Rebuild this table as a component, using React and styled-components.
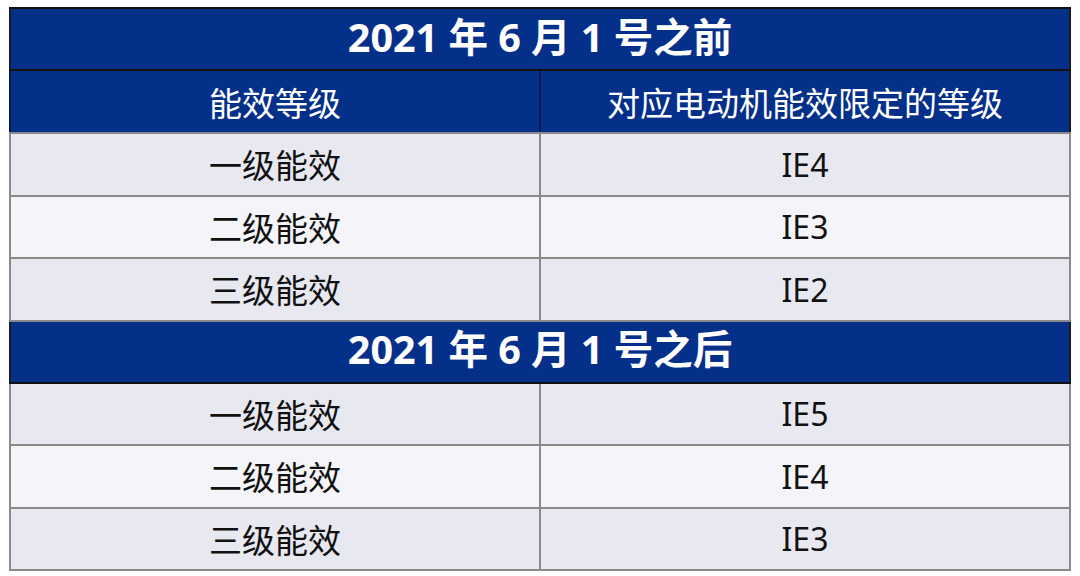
import React from "react";
import styled, { createGlobalStyle } from "styled-components";

const sections = [
  {
    title: "2021 年 6 月 1 号之前",
    head: ["能效等级", "对应电动机能效限定的等级"],
    rows: [
      ["一级能效", "IE4"],
      ["二级能效", "IE3"],
      ["三级能效", "IE2"],
    ],
  },
  {
    title: "2021 年 6 月 1 号之后",
    rows: [
      ["一级能效", "IE5"],
      ["二级能效", "IE4"],
      ["三级能效", "IE3"],
    ],
  },
];

const App = () => {
  return (
    <>
      <GlobalStyle />
      <Page>
        <Table>
          <colgroup>
            <col style={{ width: 530 }} />
            <col />
          </colgroup>
          <tbody>
            {sections.map((s) => (
              <React.Fragment key={s.title}>
                <tr>
                  <TitleCell colSpan={2}>{s.title}</TitleCell>
                </tr>
                {s.head && (
                  <tr>
                    {s.head.map((h) => (
                      <HeadCell key={h}>{h}</HeadCell>
                    ))}
                  </tr>
                )}
                {s.rows.map((r, i) => (
                  <Row key={r[0]} $odd={i % 2 === 1}>
                    <Cell>{r[0]}</Cell>
                    <Cell>
                      <Code>{r[1]}</Code>
                    </Cell>
                  </Row>
                ))}
              </React.Fragment>
            ))}
          </tbody>
        </Table>
      </Page>
    </>
  );
};

const GlobalStyle = createGlobalStyle`
  body {
    margin: 0;
    background: #ffffff;
    font-family: "Noto Sans", "Noto Sans CJK SC", sans-serif;
  }
`;

const Page = styled.div`
  padding: 7px 9px 5px 9px;
`;

const Table = styled.table`
  width: 1062px;
  border-collapse: collapse;
  table-layout: fixed;
  border: 2px solid #1c1c1c;
`;

const TitleCell = styled.th`
  height: 57px;
  padding: 0 0 3px;
  background: #05308a;
  color: #ffffff;
  font-size: 39.5px;
  font-weight: 700;
  line-height: 1;
  text-align: center;
  border-top: 2px solid #111111;
  border-bottom: 2px solid #111111;
`;

const HeadCell = styled.th`
  height: 61px;
  padding: 0;
  background: #05308a;
  color: #ffffff;
  font-size: 33px;
  font-weight: 400;
  text-align: center;
  border-left: 2px solid #0a1a4a;
  border-bottom: 2px solid #8a8a8a;
`;

const Row = styled.tr`
  background: ${(p) => (p.$odd ? "#f4f4f9" : "#e8e8f1")};
`;

const Cell = styled.td`
  height: 60.5px;
  padding: 0;
  color: #111111;
  font-size: 33px;
  text-align: center;
  border: 2px solid #8a8a8a;
`;

const Code = styled.span`
  font-size: 32px;
`;

export default App;
